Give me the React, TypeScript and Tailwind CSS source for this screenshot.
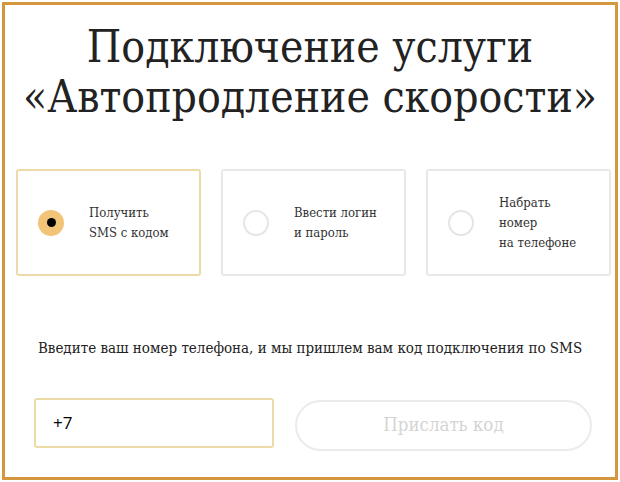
import React, { useState } from 'react';

const slab = { fontFamily: '"DejaVu Serif Condensed", "DejaVu Serif", serif' };

type Option = { id: string; lines: string[] };

const options: Option[] = [
  { id: 'sms', lines: ['Получить', 'SMS с кодом'] },
  { id: 'login', lines: ['Ввести логин', 'и пароль'] },
  { id: 'call', lines: ['Набрать', 'номер', 'на телефоне'] },
];

const App: React.FC = () => {
  const [selected, setSelected] = useState('sms');
  const [phone, setPhone] = useState('+7');

  return (
    <div className="w-[620px] h-[482px] bg-white pt-[2px] pl-[2px]">
      <div className="w-[616px] h-[478px] border-[3px] border-[#d5973d] bg-white flex flex-col" style={slab}>
        {/* Заголовок */}
        <h1 className="text-center text-[44px] leading-[50px] text-[#222] font-normal mt-[17px]">
          Подключение услуги
          <br />
          «Автопродление скорости»
        </h1>

        {/* Способы подключения */}
        <div className="flex gap-[20px] pl-[11px] mt-[47px]">
          {options.map((opt) => {
            const active = opt.id === selected;
            return (
              <button
                key={opt.id}
                type="button"
                onClick={() => setSelected(opt.id)}
                className={`w-[185px] h-[107px] rounded-[3px] border-2 flex items-center pl-[20px] text-left ${
                  active ? 'border-[#eddba7]' : 'border-[#e8e8e8]'
                }`}
              >
                {active ? (
                  <span className="w-[26px] h-[26px] rounded-full bg-[#f2c477] flex items-center justify-center shrink-0">
                    <span className="w-[9px] h-[9px] rounded-full bg-black" />
                  </span>
                ) : (
                  <span className="w-[26px] h-[26px] rounded-full border-2 border-[#e5e5e5] shrink-0" />
                )}
                <span className="ml-[25px] text-[13px] leading-[20px] text-[#333]">
                  {opt.lines.map((l) => (
                    <span key={l} className="block">
                      {l}
                    </span>
                  ))}
                </span>
              </button>
            );
          })}
        </div>

        <p className="text-center text-[15px] text-[#222] mt-[61px]">
          Введите ваш номер телефона, и мы пришлем вам код подключения по SMS
        </p>

        {/* Телефон и кнопка */}
        <div className="flex items-start mt-[38px] pl-[29px]">
          <input
            value={phone}
            onChange={(e) => setPhone(e.target.value)}
            className="w-[240px] h-[50px] border-2 border-[#eddba7] rounded-[3px] pl-[17px] text-[17px] text-black outline-none"
            style={{ fontFamily: '"Open Sans", sans-serif' }}
          />
          <button
            type="button"
            disabled
            className="ml-[21px] w-[297px] h-[51px] rounded-full border-2 border-[#ebebeb] text-[18.5px] text-[#d4d4d4] mt-[2px]"
          >
            Прислать код
          </button>
        </div>
      </div>
    </div>
  );
};

export default App;
